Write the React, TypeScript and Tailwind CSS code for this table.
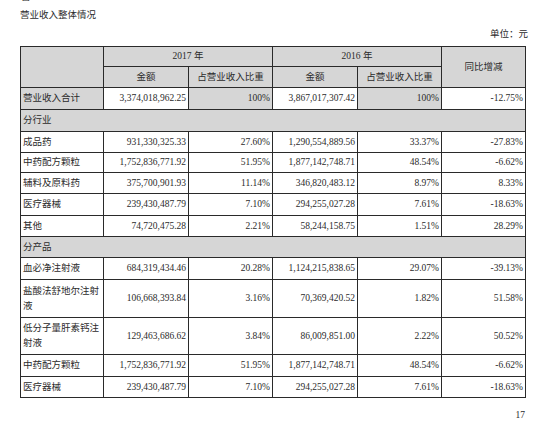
import React from "react";

type Row =
  | { kind: "section"; label: string; h: string }
  | { kind: "data"; label: string; a: string; ap: string; b: string; bp: string; c: string; h: string; total?: boolean };

const rows: Row[] = [
  { kind: "data", label: "营业收入合计", a: "3,374,018,962.25", ap: "100%", b: "3,867,017,307.42", bp: "100%", c: "-12.75%", h: "h-[22px]", total: true },
  { kind: "section", label: "分行业", h: "h-[22px]" },
  { kind: "data", label: "成品药", a: "931,330,325.33", ap: "27.60%", b: "1,290,554,889.56", bp: "33.37%", c: "-27.83%", h: "h-[21px]" },
  { kind: "data", label: "中药配方颗粒", a: "1,752,836,771.92", ap: "51.95%", b: "1,877,142,748.71", bp: "48.54%", c: "-6.62%", h: "h-[20px]" },
  { kind: "data", label: "辅料及原料药", a: "375,700,901.93", ap: "11.14%", b: "346,820,483.12", bp: "8.97%", c: "8.33%", h: "h-[21px]" },
  { kind: "data", label: "医疗器械", a: "239,430,487.79", ap: "7.10%", b: "294,255,027.28", bp: "7.61%", c: "-18.63%", h: "h-[22px]" },
  { kind: "data", label: "其他", a: "74,720,475.28", ap: "2.21%", b: "58,244,158.75", bp: "1.51%", c: "28.29%", h: "h-[21px]" },
  { kind: "section", label: "分产品", h: "h-[21px]" },
  { kind: "data", label: "血必净注射液", a: "684,319,434.46", ap: "20.28%", b: "1,124,215,838.65", bp: "29.07%", c: "-39.13%", h: "h-[22px]" },
  { kind: "data", label: "盐酸法舒地尔注射液", a: "106,668,393.84", ap: "3.16%", b: "70,369,420.52", bp: "1.82%", c: "51.58%", h: "h-[38px]" },
  { kind: "data", label: "低分子量肝素钙注射液", a: "129,463,686.62", ap: "3.84%", b: "86,009,851.00", bp: "2.22%", c: "50.52%", h: "h-[37px]" },
  { kind: "data", label: "中药配方颗粒", a: "1,752,836,771.92", ap: "51.95%", b: "1,877,142,748.71", bp: "48.54%", c: "-6.62%", h: "h-[22px]" },
  { kind: "data", label: "医疗器械", a: "239,430,487.79", ap: "7.10%", b: "294,255,027.28", bp: "7.61%", c: "-18.63%", h: "h-[21px]" },
];

const cell = "border border-[#2a2a2a] px-[2px] leading-[15px] align-middle";
const gray = "bg-[#d6d6d6]";

export default function App() {
  return (
    <div
      className="w-[554px] h-[431px] bg-white text-[#2b2b2b] text-[9.5px] overflow-hidden relative"
      style={{ fontFamily: '"Liberation Serif", "Noto Sans CJK SC", serif' }}
    >
      <div className="h-[3px] overflow-hidden pl-[21px]">
        <div className="-mt-[9px] leading-[12px]">营</div>
      </div>
      <div className="pl-[20px] mt-[6px] leading-[12px]">营业收入整体情况</div>
      <div className="flex justify-end pr-[26px] mt-[7px] leading-[12px]">单位：元</div>
      <div className="pl-[20px] mt-[6px]">
        <table className="border-collapse table-fixed w-[505px]">
          <colgroup>
            <col className="w-[83px]" />
            <col className="w-[85px]" />
            <col className="w-[84px]" />
            <col className="w-[85px]" />
            <col className="w-[84px]" />
            <col className="w-[84px]" />
          </colgroup>
          <tbody>
            <tr className="h-[20px]">
              <td rowSpan={2} className={`${cell} ${gray}`}></td>
              <td colSpan={2} className={`${cell} ${gray} text-center`}>2017 年</td>
              <td colSpan={2} className={`${cell} ${gray} text-center`}>2016 年</td>
              <td rowSpan={2} className={`${cell} ${gray} text-center`}>同比增减</td>
            </tr>
            <tr className="h-[21px]">
              <td className={`${cell} ${gray} text-center`}>金额</td>
              <td className={`${cell} ${gray} text-center`}>占营业收入比重</td>
              <td className={`${cell} ${gray} text-center`}>金额</td>
              <td className={`${cell} ${gray} text-center`}>占营业收入比重</td>
            </tr>
            {rows.map((r, i) =>
              r.kind === "section" ? (
                <tr key={i} className={r.h}>
                  <td colSpan={6} className={`${cell} ${gray}`}>{r.label}</td>
                </tr>
              ) : (
                <tr key={i} className={r.h}>
                  <td className={`${cell} ${r.total ? gray : ""}`}>{r.label}</td>
                  <td className={`${cell} text-right`}>{r.a}</td>
                  <td className={`${cell} text-right ${r.total ? gray : ""}`}>{r.ap}</td>
                  <td className={`${cell} text-right`}>{r.b}</td>
                  <td className={`${cell} text-right ${r.total ? gray : ""}`}>{r.bp}</td>
                  <td className={`${cell} text-right`}>{r.c}</td>
                </tr>
              )
            )}
          </tbody>
        </table>
      </div>
      <div className="flex justify-end pr-[29px] mt-[11px] leading-[12px]">17</div>
    </div>
  );
}
